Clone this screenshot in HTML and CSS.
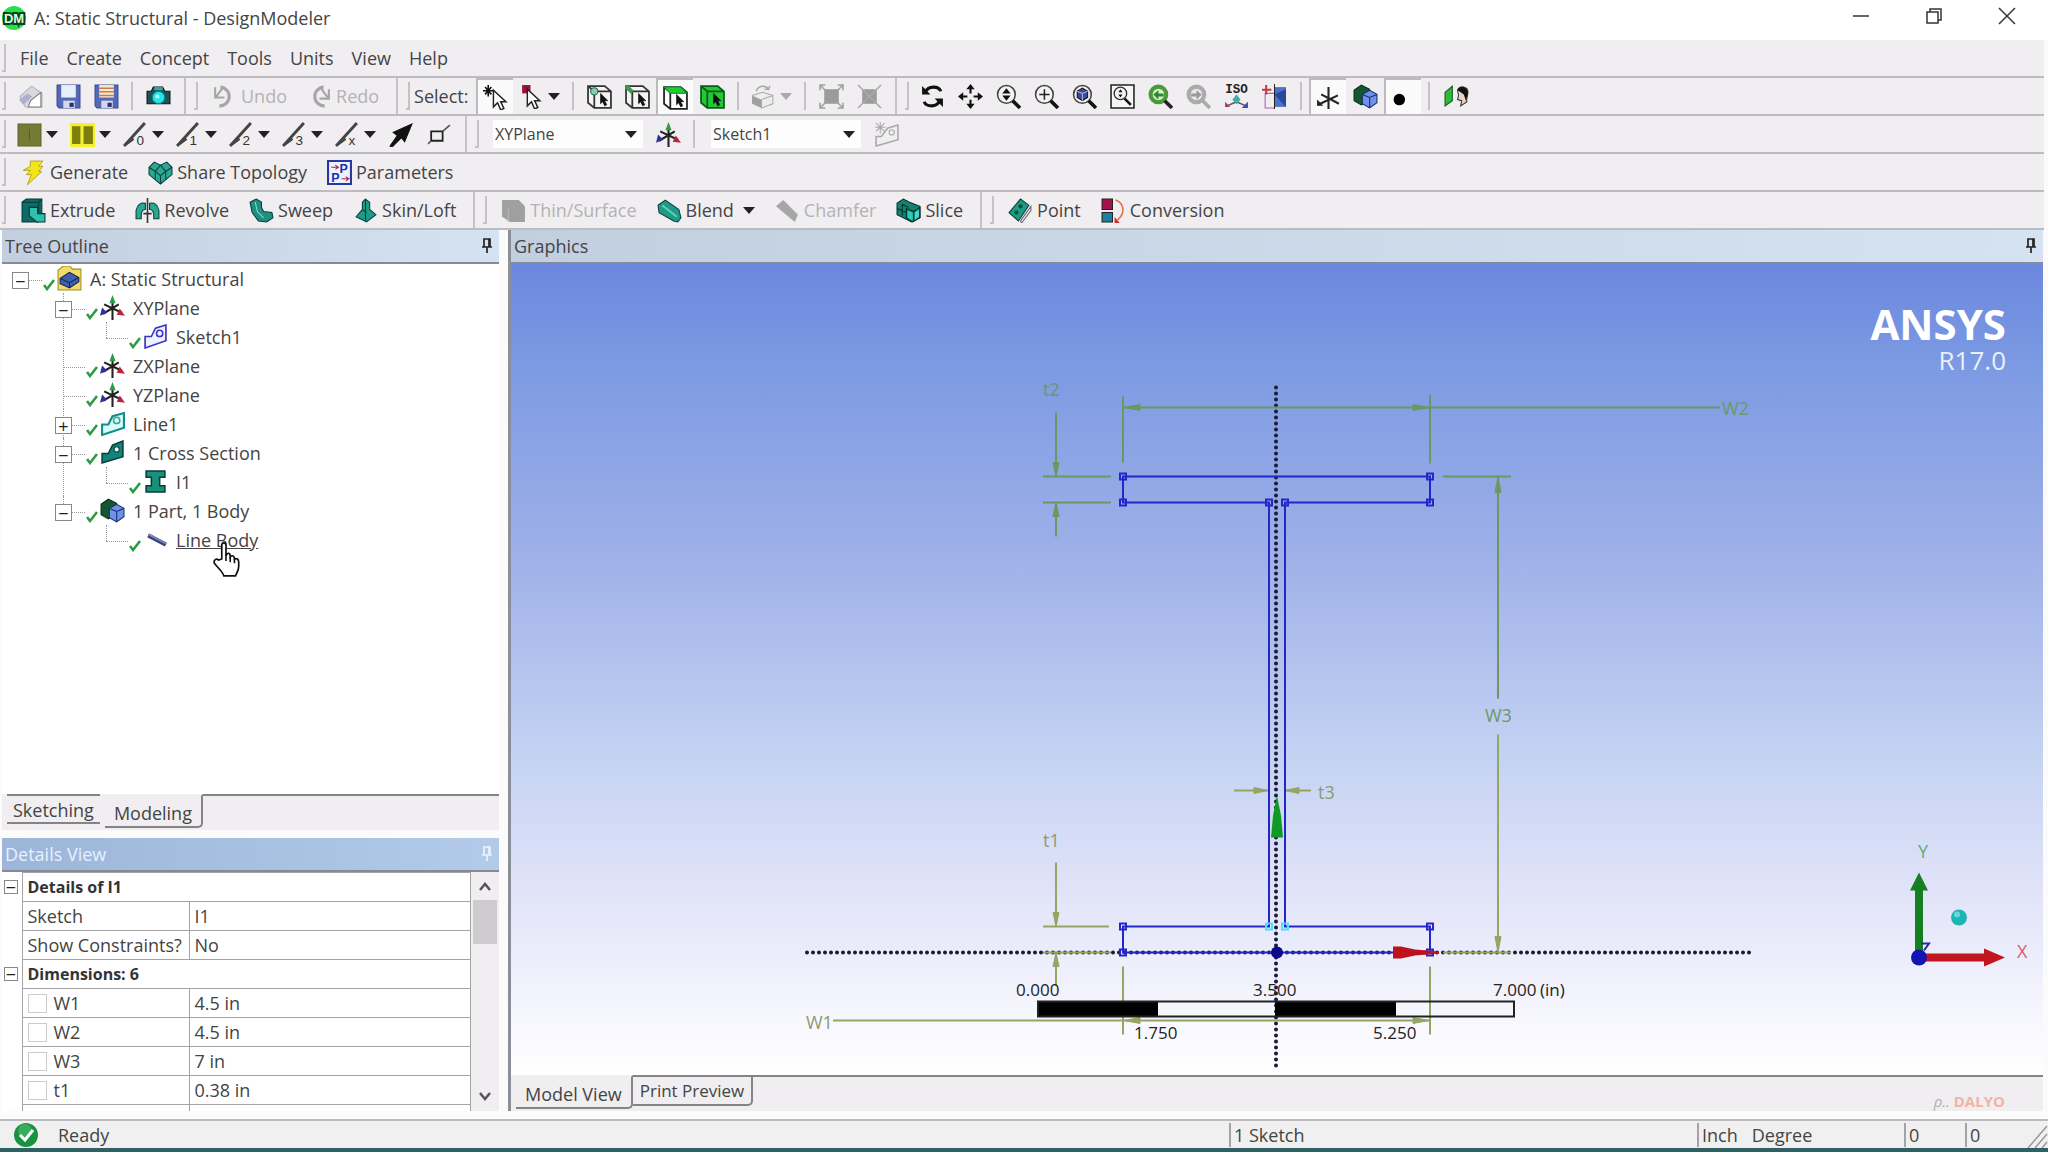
FILE: index.html
```html
<!DOCTYPE html>
<html lang="en">

<head>
  <meta charset="utf-8">
  <title>A: Static Structural - DesignModeler</title>
  <link rel="stylesheet" href="styles.css">
</head>

<body>
  <!-- icon set -->
  <svg class="sprite" aria-hidden="true">
    <symbol id="i-open" viewBox="0 0 24 24"><path d="M2 12L13 2l10 7v13H7z" fill="#d9d9e0" stroke="#b5b5bd"/><path d="M12 16l10-8v14H10z" fill="#fff" stroke="#777"/><path d="M1 15l8-6 5 3-9 8z" fill="#aeb0cc"/></symbol>
    <symbol id="i-save" viewBox="0 0 24 24"><path d="M1 1h22v22H3l-2-2z" fill="#5468b8" stroke="#3c4a90"/><path d="M5 1h14v12H5z" fill="#e6eef8"/><path d="M7 16h11v7H7z" fill="#d5d8ea"/><path d="M13 18h4v4h-4z" fill="#26306e"/></symbol>
    <symbol id="i-saveas" viewBox="0 0 24 24"><path d="M1 1h22v22H3l-2-2z" fill="#5468b8" stroke="#3c4a90"/><path d="M5 1h14v12H5z" fill="#f7e9d8"/><path d="M5 4h14M5 7.500h14M5 11h14" stroke="#d07a3c" stroke-width="1.500"/><path d="M7 16h11v7H7z" fill="#d5d8ea"/><path d="M13 18h4v4h-4z" fill="#26306e"/></symbol>
    <symbol id="i-camera" viewBox="0 0 24 24"><path d="M1 7h4l2-4h9l2 4h5v12H1z" fill="#1e4f5a" stroke="#111"/><path d="M8 3h8v3H8z" fill="#3aa"/><circle cx="12" cy="13" r="6" fill="#2be0ea" stroke="#087"/><circle cx="11" cy="12" r="2" fill="#b8ffff"/></symbol>
    <symbol id="i-undo" viewBox="0 0 24 24"><path d="M8 3a9 9 0 1 1-1 18" fill="none" stroke="#a6a6a6" stroke-width="3"/><path d="M3 3v10h9M4 12l6-8" fill="none" stroke="#a6a6a6" stroke-width="2"/></symbol>
    <symbol id="i-redo" viewBox="0 0 24 24"><path d="M16 3a9 9 0 1 0 1 18" fill="none" stroke="#a6a6a6" stroke-width="3"/><path d="M21 5v9h-9M20 13l-6-8" fill="none" stroke="#a6a6a6" stroke-width="2"/></symbol>
    <symbol id="i-pick" viewBox="0 0 24 24"><path d="M5 0v11M0 5.500h10M2 2l6 7M8 2L2 9" stroke="#111" stroke-width="1.500"/><path d="M10 5v16l4-4 3 7 3-1.500-3-6.500h5z" fill="#fff" stroke="#222" stroke-width="1.400"/></symbol>
    <symbol id="i-mode" viewBox="0 0 24 24"><path d="M3 1h8v8H3z" fill="#9c1230"/><path d="M8 5v16l4-4 3 7 3-1.500-3-6.500h5z" fill="#fff" stroke="#222" stroke-width="1.400"/></symbol>
    <symbol id="i-cursor" viewBox="0 0 24 24"><path d="M13 9v10l2-2 2 4 2-1-2-4h3z" fill="#111" stroke="#111" stroke-width=".6"/></symbol>
    <symbol id="i-selv" viewBox="0 0 24 24"><path d="M1 2h16l6 5v16H7l-6-5zM7 7h16M7 7v16M7 7L1 2" fill="#f4f4f2" stroke="#333" stroke-width="1.700"/><circle cx="7" cy="7" r="3.500" fill="#8fc9ae" stroke="#176b48"/><use href="#i-cursor" width="24" height="24"/></symbol>
    <symbol id="i-sele" viewBox="0 0 24 24"><path d="M1 2h16l6 5v16H7l-6-5zM7 7h16M7 7v16M7 7L1 2" fill="#f4f4f2" stroke="#333" stroke-width="1.700"/><path d="M1 2l6 6" stroke="#3c9b50" stroke-width="4"/><use href="#i-cursor" width="24" height="24"/></symbol>
    <symbol id="i-self" viewBox="0 0 24 24"><path d="M1 2h16l6 5v16H7l-6-5zM7 7h16M7 7v16M7 7L1 2" fill="#fff" stroke="#222" stroke-width="1.700"/><path d="M1 2h16l6 6H7z" fill="#1fd02c" stroke="#184"/><use href="#i-cursor" width="24" height="24"/></symbol>
    <symbol id="i-selb" viewBox="0 0 24 24"><path d="M1 2h16l6 5v16H7l-6-5zM7 7h16M7 7v16M7 7L1 2" fill="#22c932" stroke="#0a5a18" stroke-width="1.700"/><use href="#i-cursor" width="24" height="24"/></symbol>
    <symbol id="i-extend" viewBox="0 0 24 24"><path d="M1 11l9 4v8l-9-4z" fill="#a0a0a0"/><path d="M10 15l11-4v8l-11 4zM1 11l10-3 10 3" fill="#ededed" stroke="#aaa"/><path d="M5 7c2-6 9-6 12-2l1-3M17 5h-4" fill="none" stroke="#a8a8a8" stroke-width="1.500"/></symbol>
    <symbol id="i-expand" viewBox="0 0 24 24"><path d="M5 5h14v14H5z" fill="#9b9b9b"/><path d="M1 6V1h5M18 1h5v5M23 18v5h-5M6 23H1v-5M1 1l5 5M23 1l-5 5M23 23l-5-5M1 23l5-5" fill="none" stroke="#a0a0a0" stroke-width="1.500"/></symbol>
    <symbol id="i-shrink" viewBox="0 0 24 24"><path d="M5 5h14v14H5z" fill="#9b9b9b"/><path d="M1 1l22 22M23 1L1 23" stroke="#aaa" stroke-width="1.500"/></symbol>
    <symbol id="i-rotate" viewBox="0 0 24 24"><path d="M5 8c3-7 13-6 15-1M19 16c-3 7-13 6-15 1" fill="none" stroke="#111" stroke-width="3"/><path d="M2 2v8h8zM22 22v-8h-8z" fill="#111"/></symbol>
    <symbol id="i-pan" viewBox="0 0 24 24"><path d="M12 0l4 5H8zM12 24l4-5H8zM0 12l5-4v8zM24 12l-5-4v8z" fill="#111"/><path d="M12 4v5M12 15v5M4 12h5M15 12h5" stroke="#111" stroke-width="2"/></symbol>
    <symbol id="i-lens" viewBox="0 0 24 24"><circle cx="10" cy="10" r="8.500" fill="#f2f2f2" stroke="#444" stroke-width="1.500"/><path d="M16 16l7 7" stroke="#111" stroke-width="3.500"/></symbol>
    <symbol id="i-zoom" viewBox="0 0 24 24"><use href="#i-lens" width="24" height="24"/><path d="M10 4l4 5H6zM10 16l4-5H6z" fill="#111"/></symbol>
    <symbol id="i-zoomin" viewBox="0 0 24 24"><use href="#i-lens" width="24" height="24"/><path d="M10 5v10M5 10h10" stroke="#222" stroke-width="1.500"/></symbol>
    <symbol id="i-zoomfit" viewBox="0 0 24 24"><use href="#i-lens" width="24" height="24"/><path d="M5 7l5-3 5 3v6l-5 3-5-3z" fill="#3c4c90" stroke="#112"/><path d="M5 7l5 2 5-2M10 9v7" fill="none" stroke="#aab6ea"/></symbol>
    <symbol id="i-zoomwin" viewBox="0 0 24 24"><path d="M1 1h22v22H1z" fill="#f6f6f6" stroke="#222" stroke-width="1.500"/><circle cx="10" cy="9" r="6" fill="none" stroke="#333" stroke-width="1.300"/><path d="M14 14l6 6" stroke="#111" stroke-width="2.500"/><path d="M10 5l2 3H8zM10 13l2-3H8z" fill="#111"/></symbol>
    <symbol id="i-prev" viewBox="0 0 24 24"><circle cx="10" cy="10" r="7.500" fill="#d8f0cc" stroke="#4a9a3a" stroke-width="4"/><path d="M16 16l7 7" stroke="#222" stroke-width="3.500"/><path d="M5 10l5-4v3h5v3h-5v3z" fill="#2c8a2c"/></symbol>
    <symbol id="i-next" viewBox="0 0 24 24"><circle cx="10" cy="10" r="7.500" fill="#e8e8e8" stroke="#ababab" stroke-width="4"/><path d="M16 16l7 7" stroke="#ababab" stroke-width="3.500"/><path d="M15 10l-5-4v3H5v3h5v3z" fill="#999"/></symbol>
    <symbol id="i-iso" viewBox="0 0 24 24"><text x="12" y="9" text-anchor="middle" font-size="12" font-weight="bold" font-family="Liberation Mono" fill="#222">ISO</text><path d="M12 11v8M12 17l-9 4M12 17l9 4" stroke="#556" stroke-width="1.500"/><path d="M12 10l4 5-4 4-4-4z" fill="#35b3a8"/><path d="M1 17l5 5H1z" fill="#b0307a"/><path d="M23 17v6h-6z" fill="#3a4ac0"/></symbol>
    <symbol id="i-plane" viewBox="0 0 24 24"><path d="M3 9h9v14H3z" fill="none" stroke="#a066b0"/><path d="M12 3h11v19H12z" fill="#4b72c8"/><path d="M12 10l11-5v17z" fill="#27489c"/><path d="M12 0v24" stroke="#222"/><path d="M4 1v9M0 5.500h9" stroke="#c23a48" stroke-width="2"/></symbol>
    <symbol id="i-axisbw" viewBox="0 0 24 24"><path d="M12 2v21M2 19l19-9M5 9l17 9" fill="none" stroke="#222" stroke-width="2"/><path d="M1 14l6 6H1z" fill="#222"/></symbol>
    <symbol id="i-body" viewBox="0 0 24 24"><path d="M1 6l7-5 8 4v11l-8 4-7-4z" fill="#14562f" stroke="#0b301b"/><path d="M9 10l7-4 7 4v8l-7 5-7-4z" fill="#6c92ea" stroke="#1a2c70"/><path d="M9 10l7 3 7-3M16 13v10" fill="none" stroke="#1a2c70"/></symbol>
    <symbol id="i-dot" viewBox="0 0 24 24"><circle cx="8" cy="14" r="5.500" fill="#000"/></symbol>
    <symbol id="i-look" viewBox="0 0 24 24"><path d="M1 8l7-6v14l-7 5z" fill="#2fb83a" stroke="#175c1e"/><path d="M13 6c2-5 10-4 10 2 0 4-2 6-1 9l-6 4 1-5-4-1 1-4z" fill="#e9d4c6" stroke="#333"/><path d="M13 6c2-5 10-4 10 3l-2 7-2-6-3-2z" fill="#111"/></symbol>
    <symbol id="i-sq1" viewBox="0 0 24 24"><path d="M1 2h22v21H1z" fill="#757a35"/><path d="M1 2h22v21H1zM12 7v11" fill="none" stroke="#5c6025"/></symbol>
    <symbol id="i-sq2" viewBox="0 0 24 24"><path d="M0 1h24v23H0z" fill="#f2f030"/><path d="M2 4h8v17H2zM13 4h9v17h-9z" fill="#7e7e0c"/></symbol>
    <symbol id="i-edge" viewBox="0 0 24 24"><path d="M1 23L21 1M2 22l8-6" stroke="#444" stroke-width="2.800"/></symbol>
    <symbol id="i-dir" viewBox="0 0 24 24"><path d="M1 23l7-10-4-3 18-8-7 17-3-4L3 24z" fill="#111" stroke="#111"/></symbol>
    <symbol id="i-vert" viewBox="0 0 24 24"><path d="M4 9h11v9H4z" fill="none" stroke="#222" stroke-width="1.700"/><path d="M15 9l7-6M4 18l-3 3" stroke="#555" stroke-width="1.500"/></symbol>
    <symbol id="i-axis" viewBox="0 0 24 24"><path d="M12 4v20M3 18l15-9M4 9l17 8" fill="none" stroke="#222" stroke-width="2"/><path d="M12 0l3 8H9z" fill="#2f9b45"/><path d="M24 20l-8-1 3-6z" fill="#b8263e"/><path d="M0 20l2-8 5 5z" fill="#30309c"/></symbol>
    <symbol id="i-sketch" viewBox="0 0 24 24"><path d="M2 12h6l4-8 10-3v15L2 23z" fill="#f2f2ff" stroke="#3b35c4" stroke-width="1.600"/><circle cx="16" cy="9" r="3" fill="none" stroke="#3b35c4" stroke-width="1.500"/></symbol>
    <symbol id="i-newsk" viewBox="0 0 24 24"><path d="M2 14h5l6-8 10-3v14L2 23z" fill="none" stroke="#a8a8a8" stroke-width="1.500"/><circle cx="17" cy="10" r="2.500" fill="none" stroke="#a8a8a8"/><path d="M6 0v11M1 5h10M2 1l8 8M10 1L2 9" stroke="#a8a8a8"/></symbol>
    <symbol id="i-bolt" viewBox="0 0 24 24"><path d="M9 1l12 0-4 5h4l-4 5h3L6 24l4-10H5l4-4H2l7-4z" fill="#f5e31c" stroke="#a99b10" stroke-width=".8"/></symbol>
    <symbol id="i-share" viewBox="0 0 24 24"><path d="M1 7l5-5 6 3 6-3 5 5v7l-11 9L1 14z" fill="#2aa893" stroke="#08403a"/><path d="M1 7l6 4 5-6 5 6 6-4M7 11v7M17 11v7M7 11l5 4 5-4M12 15v8" fill="none" stroke="#08403a"/></symbol>
    <symbol id="i-param" viewBox="0 0 24 24"><path d="M1 1h22v22H1z" fill="#eef2ff" stroke="#2738a0" stroke-width="2"/><text x="12" y="12" font-size="12" font-weight="bold" font-family="Liberation Sans" fill="#1b2fa8">P</text><text x="4" y="21" font-size="12" font-weight="bold" font-family="Liberation Sans" fill="#1b2fa8">P</text><path d="M4 7h6M8 5l3 2-3 2M14 18h6M18 16l3 2-3 2" fill="none" stroke="#a02a50"/></symbol>
    <symbol id="i-extrude" viewBox="0 0 24 24"><path d="M1 4l4-3h15v18l-3 4H1z" fill="#0d6b66" stroke="#053a38"/><path d="M1 4h16v19M17 4l3-3" fill="none" stroke="#053a38"/><path d="M8 9h8v6h7v8h-8l-7-6z" fill="#2fc0ab" stroke="#053a38"/></symbol>
    <symbol id="i-revolve" viewBox="0 0 24 24"><path d="M1 12c1-6 5-8 9-7v6c-3 0-4 2-4 6v3H1zM23 12c-1-6-5-8-9-7v6c3 0 4 2 4 6v3h5z" fill="#2aa893" stroke="#08403a"/><path d="M12 0v24M8 15h8" stroke="#333" stroke-width="1.500"/></symbol>
    <symbol id="i-sweep" viewBox="0 0 24 24"><path d="M1 4l6-3 5 3v5l2 4 8 1 1 5-6 4-8-1-6-8z" fill="#1f8f80" stroke="#08403a"/><path d="M6 4l2 9 6 6" fill="none" stroke="#7fe0d0"/></symbol>
    <symbol id="i-skin" viewBox="0 0 24 24"><path d="M12 1l4 3v7l6 5-9 7-10-5 6-7V4z" fill="#1f9a86" stroke="#08403a"/><path d="M12 2v20M9 11l4 3" stroke="#08403a"/></symbol>
    <symbol id="i-thin" viewBox="0 0 24 24"><path d="M1 2h16l6 6v15H9L1 18z" fill="#a0a0a0"/><path d="M7 23V9" stroke="#b8b8b8"/></symbol>
    <symbol id="i-blend" viewBox="0 0 24 24"><path d="M1 7l7-5 13 9 2 8-3 4-4-1L2 14z" fill="#1f9a86" stroke="#08403a"/><path d="M5 7l14 11" stroke="#62cdbb" stroke-width="2"/></symbol>
    <symbol id="i-chamfer" viewBox="0 0 24 24"><path d="M1 8l7-6 14 14-3 7z" fill="#a6a6a6"/></symbol>
    <symbol id="i-slice" viewBox="0 0 24 24"><path d="M1 5l6-4 6 3 10 4v11l-8 4-8-4-6-3z" fill="#148070" stroke="#05322d"/><path d="M10 10l7 3 6-4v10l-7 4-6-4zM6 6l6 3M6 6v11M1 10l9 4M17 13v10" fill="none" stroke="#05322d"/><path d="M11 12l5 2v8l-5-3z" fill="#27d0b6"/><path d="M18 14l4-3v7l-4 3z" fill="#43dcc6"/></symbol>
    <symbol id="i-point" viewBox="0 0 24 24"><path d="M1 14L12 1l8 6-10 15z" fill="#1f9a86" stroke="#08403a"/><path d="M12 22l10-14v4L13 24z" fill="#eee" stroke="#666"/><circle cx="12" cy="8" r="2" fill="#053"/><circle cx="8" cy="14" r="2" fill="#053"/></symbol>
    <symbol id="i-conv" viewBox="0 0 24 24"><path d="M1 1h10v10H1z" fill="#a8104a" stroke="#222"/><path d="M1 14h10v9H1z" fill="#1f7fa0" stroke="#222"/><path d="M14 2c8 3 10 12 2 19" fill="none" stroke="#e0704a" stroke-width="1.500"/><path d="M13 18v6h5z" fill="#c33"/></symbol>
    <symbol id="i-folder" viewBox="0 0 24 24"><path d="M1 4l5-4h6l3 3h8v20H1z" fill="#f0dc6a" stroke="#a08c20"/><path d="M3 12l9-6 9 5v4l-9 6-9-4z" fill="#3d5fae" stroke="#1a2450"/><path d="M3 12l9 4 9-5M12 16v5" fill="none" stroke="#1a2450"/></symbol>
    <symbol id="i-line" viewBox="0 0 24 24"><path d="M2 13h6l4-8 11-3v14L2 23z" fill="#d8fbf6" stroke="#138d88" stroke-width="2"/><circle cx="16" cy="9" r="3" fill="none" stroke="#35a7a0" stroke-width="1.500"/></symbol>
    <symbol id="i-cross" viewBox="0 0 24 24"><path d="M2 13h6l4-8 10-4v15L2 22z" fill="#12857a" stroke="#083f3a" stroke-width="1.500"/><circle cx="16" cy="9" r="2.500" fill="#e8fffb" stroke="#083f3a"/></symbol>
    <symbol id="i-ibeam" viewBox="0 0 24 24"><path d="M3 2h18v6h-5v8h5v6H3v-6h5V8H3z" fill="#17917c" stroke="#093f37" stroke-width="1.500"/></symbol>
    <symbol id="i-linebody" viewBox="0 0 24 24"><path d="M5 8l17 9" stroke="#3c4470" stroke-width="4"/><path d="M5 7l17 9" stroke="#7f8cc4" stroke-width="1.500"/></symbol>
    <symbol id="i-check" viewBox="0 0 12 12"><path d="M1 6l3 4 7-9" fill="none" stroke="#2f9b40" stroke-width="2.600"/></symbol>
    <symbol id="i-pin" viewBox="0 0 12 16"><path d="M3 1h6v8H3zM1 9h10M6 9v6M8 1v8" fill="none" stroke="currentColor" stroke-width="1.700"/></symbol>
  </svg>

  <header class="titlebar">
    <svg class="app-logo" viewBox="0 0 24 24"><circle cx="12" cy="12" r="12" fill="#28e04c"/><text x="12" y="17" text-anchor="middle" font-size="13" font-weight="bold" font-family="Liberation Sans" fill="#d8ffd8" stroke="#042" stroke-width="4" paint-order="stroke">DM</text></svg>
    <span class="title">A: Static Structural - DesignModeler</span>
    <button class="win-btn" aria-label="Minimize"><svg viewBox="0 0 18 18"><path d="M1 9h16"/></svg></button>
    <button class="win-btn" aria-label="Restore"><svg viewBox="0 0 18 18"><path d="M2 5h11v11H2zM5 5V2h11v11h-3"/></svg></button>
    <button class="win-btn" aria-label="Close"><svg viewBox="0 0 18 18"><path d="M1 1l16 16M17 1L1 17"/></svg></button>
  </header>

  <nav class="row menu">
    <span class="grip"></span>
    <button>File</button>
    <button>Create</button>
    <button>Concept</button>
    <button>Tools</button>
    <button>Units</button>
    <button>View</button>
    <button>Help</button>
  </nav>

  <div class="row">
    <div class="bar">
      <span class="grip"></span>
      <button class="tool" aria-label="Open"><svg><use href="#i-open"/></svg></button>
      <button class="tool" aria-label="Save"><svg><use href="#i-save"/></svg></button>
      <button class="tool" aria-label="Save as"><svg><use href="#i-saveas"/></svg></button>
      <span class="sep"></span>
      <button class="tool" aria-label="Image capture"><svg><use href="#i-camera"/></svg></button>
    </div>
    <div class="bar">
      <span class="grip"></span>
      <button class="cmd" disabled><svg><use href="#i-undo"/></svg>Undo</button>
      <button class="cmd" disabled><svg><use href="#i-redo"/></svg>Redo</button>
    </div>
    <div class="bar">
      <span class="grip"></span>
      <span class="bar-label">Select:</span>
      <button class="tool pressed" aria-label="New selection"><svg><use href="#i-pick"/></svg></button>
      <button class="tool drop" aria-label="Select mode"><svg><use href="#i-mode"/></svg><i class="caret"></i></button>
      <span class="sep"></span>
      <button class="tool" aria-label="Points"><svg><use href="#i-selv"/></svg></button>
      <button class="tool" aria-label="Edges"><svg><use href="#i-sele"/></svg></button>
      <button class="tool pressed" aria-label="Faces"><svg><use href="#i-self"/></svg></button>
      <button class="tool" aria-label="Bodies"><svg><use href="#i-selb"/></svg></button>
      <span class="sep"></span>
      <button class="tool drop" aria-label="Extend selection" disabled><svg><use href="#i-extend"/></svg><i class="caret"></i></button>
      <span class="sep"></span>
      <button class="tool" aria-label="Expand" disabled><svg><use href="#i-expand"/></svg></button>
      <button class="tool" aria-label="Shrink" disabled><svg><use href="#i-shrink"/></svg></button>
    </div>
    <div class="bar open view">
      <span class="grip"></span>
      <button class="tool" aria-label="Rotate"><svg><use href="#i-rotate"/></svg></button>
      <button class="tool" aria-label="Pan"><svg><use href="#i-pan"/></svg></button>
      <button class="tool" aria-label="Zoom"><svg><use href="#i-zoom"/></svg></button>
      <button class="tool" aria-label="Zoom in"><svg><use href="#i-zoomin"/></svg></button>
      <button class="tool" aria-label="Zoom to fit"><svg><use href="#i-zoomfit"/></svg></button>
      <button class="tool" aria-label="Box zoom"><svg><use href="#i-zoomwin"/></svg></button>
      <button class="tool" aria-label="Previous view"><svg><use href="#i-prev"/></svg></button>
      <button class="tool" aria-label="Next view" disabled><svg><use href="#i-next"/></svg></button>
      <button class="tool" aria-label="ISO view"><svg><use href="#i-iso"/></svg></button>
      <button class="tool" aria-label="Look at plane"><svg><use href="#i-plane"/></svg></button>
      <span class="sep"></span>
      <button class="tool pressed" aria-label="Display plane"><svg><use href="#i-axisbw"/></svg></button>
      <button class="tool" aria-label="Display model"><svg><use href="#i-body"/></svg></button>
      <button class="tool pressed" aria-label="Display points"><svg><use href="#i-dot"/></svg></button>
      <span class="sep"></span>
      <button class="tool" aria-label="Look at face"><svg><use href="#i-look"/></svg></button>
    </div>
  </div>

  <div class="row">
    <div class="bar">
      <span class="grip"></span>
      <button class="tool drop" aria-label="Face colour"><svg><use href="#i-sq1"/></svg><i class="caret"></i></button>
      <button class="tool drop" aria-label="Edge colour"><svg><use href="#i-sq2"/></svg><i class="caret"></i></button>
      <button class="tool drop" aria-label="Edges 0"><svg viewBox="0 0 24 24"><use href="#i-edge"/><text class="edge-num" x="13" y="22">0</text></svg><i class="caret"></i></button>
      <button class="tool drop" aria-label="Edges 1"><svg viewBox="0 0 24 24"><use href="#i-edge"/><text class="edge-num" x="13" y="22">1</text></svg><i class="caret"></i></button>
      <button class="tool drop" aria-label="Edges 2"><svg viewBox="0 0 24 24"><use href="#i-edge"/><text class="edge-num" x="13" y="22">2</text></svg><i class="caret"></i></button>
      <button class="tool drop" aria-label="Edges 3"><svg viewBox="0 0 24 24"><use href="#i-edge"/><text class="edge-num" x="13" y="22">3</text></svg><i class="caret"></i></button>
      <button class="tool drop" aria-label="Edges X"><svg viewBox="0 0 24 24"><use href="#i-edge"/><text class="edge-num" x="13" y="22">x</text></svg><i class="caret"></i></button>
      <button class="tool" aria-label="Edge direction"><svg><use href="#i-dir"/></svg></button>
      <button class="tool" aria-label="Vertices"><svg><use href="#i-vert"/></svg></button>
    </div>
    <div class="bar open">
      <span class="grip"></span>
      <label class="combo"><select aria-label="Active plane"><option>XYPlane</option></select><i class="caret"></i></label>
      <button class="tool" aria-label="New plane"><svg><use href="#i-axis"/></svg></button>
      <span class="sep"></span>
      <label class="combo"><select aria-label="Active sketch"><option>Sketch1</option></select><i class="caret"></i></label>
      <button class="tool" aria-label="New sketch" disabled><svg><use href="#i-newsk"/></svg></button>
    </div>
  </div>

  <div class="row">
    <div class="bar open">
      <span class="grip"></span>
      <button class="cmd"><svg><use href="#i-bolt"/></svg>Generate</button>
      <button class="cmd"><svg><use href="#i-share"/></svg>Share Topology</button>
      <button class="cmd"><svg><use href="#i-param"/></svg>Parameters</button>
    </div>
  </div>

  <div class="row">
    <div class="bar">
      <span class="grip"></span>
      <button class="cmd"><svg><use href="#i-extrude"/></svg>Extrude</button>
      <button class="cmd"><svg><use href="#i-revolve"/></svg>Revolve</button>
      <button class="cmd"><svg><use href="#i-sweep"/></svg>Sweep</button>
      <button class="cmd"><svg><use href="#i-skin"/></svg>Skin/Loft</button>
    </div>
    <div class="bar">
      <span class="grip"></span>
      <button class="cmd" disabled><svg><use href="#i-thin"/></svg>Thin/Surface</button>
      <button class="cmd"><svg><use href="#i-blend"/></svg>Blend<i class="caret"></i></button>
      <button class="cmd" disabled><svg><use href="#i-chamfer"/></svg>Chamfer</button>
      <button class="cmd"><svg><use href="#i-slice"/></svg>Slice</button>
    </div>
    <div class="bar open">
      <span class="grip"></span>
      <button class="cmd"><svg><use href="#i-point"/></svg>Point</button>
      <button class="cmd"><svg><use href="#i-conv"/></svg>Conversion</button>
    </div>
  </div>

  <main>
    <aside>
      <section class="outline">
        <h2 class="pane-title">Tree Outline<svg class="pin"><use href="#i-pin"/></svg></h2>
        <ul class="tree">
          <li>
            <div class="node"><button class="toggle">−</button><svg class="check"><use href="#i-check"/></svg><svg class="icon"><use href="#i-folder"/></svg>A: Static Structural</div>
            <ul>
              <li>
                <div class="node"><button class="toggle">−</button><svg class="check"><use href="#i-check"/></svg><svg class="icon"><use href="#i-axis"/></svg>XYPlane</div>
                <ul>
                  <li><div class="node leaf"><svg class="check"><use href="#i-check"/></svg><svg class="icon"><use href="#i-sketch"/></svg>Sketch1</div></li>
                </ul>
              </li>
              <li><div class="node leaf"><svg class="check"><use href="#i-check"/></svg><svg class="icon"><use href="#i-axis"/></svg>ZXPlane</div></li>
              <li><div class="node leaf"><svg class="check"><use href="#i-check"/></svg><svg class="icon"><use href="#i-axis"/></svg>YZPlane</div></li>
              <li><div class="node"><button class="toggle">+</button><svg class="check"><use href="#i-check"/></svg><svg class="icon"><use href="#i-line"/></svg>Line1</div></li>
              <li>
                <div class="node"><button class="toggle">−</button><svg class="check"><use href="#i-check"/></svg><svg class="icon"><use href="#i-cross"/></svg>1 Cross Section</div>
                <ul>
                  <li><div class="node leaf"><svg class="check"><use href="#i-check"/></svg><svg class="icon"><use href="#i-ibeam"/></svg>I1</div></li>
                </ul>
              </li>
              <li>
                <div class="node"><button class="toggle">−</button><svg class="check"><use href="#i-check"/></svg><svg class="icon"><use href="#i-body"/></svg>1 Part, 1 Body</div>
                <ul>
                  <li><div class="node leaf"><svg class="check"><use href="#i-check"/></svg><svg class="icon"><use href="#i-linebody"/></svg><span class="hovered">Line Body<svg class="hand" viewBox="0 0 26 34"><path d="M9 17V4c0-3 4-3 4 0v10l1-2c2-1 3 0 3 3 2-2 4-1 4 2 2-1 4 0 4 3v4c0 4-2 6-3 9H11c-1-4-6-8-9-12-1-3 2-5 4-3z" fill="#fff" stroke="#111" stroke-width="1.600"/><path d="M13 13v6M17 15v5M21 17v4" stroke="#111" stroke-width="1.500"/></svg></span></div></li>
                </ul>
              </li>
            </ul>
          </li>
        </ul>
        <div class="tabs">
          <button class="tab">Sketching</button>
          <button class="tab active">Modeling</button>
          <span class="tab-rest"></span>
        </div>
      </section>

      <section class="details">
        <h2 class="pane-title focused">Details View<svg class="pin"><use href="#i-pin"/></svg></h2>
        <div class="details-body">
          <table>
            <tr><td class="fold"><button class="toggle">−</button></td><th colspan="2">Details of I1</th></tr>
            <tr><td class="fold"></td><td class="key">Sketch</td><td>I1</td></tr>
            <tr><td class="fold"></td><td class="key">Show Constraints?</td><td>No</td></tr>
            <tr><td class="fold"><button class="toggle">−</button></td><th colspan="2">Dimensions: 6</th></tr>
            <tr><td class="fold"></td><td class="key"><label><input type="checkbox">W1</label></td><td>4.5 in</td></tr>
            <tr><td class="fold"></td><td class="key"><label><input type="checkbox">W2</label></td><td>4.5 in</td></tr>
            <tr><td class="fold"></td><td class="key"><label><input type="checkbox">W3</label></td><td>7 in</td></tr>
            <tr><td class="fold"></td><td class="key"><label><input type="checkbox">t1</label></td><td>0.38 in</td></tr>
            <tr><td class="fold"></td><td class="key"></td><td></td></tr>
          </table>
          <div class="scroll">
            <svg viewBox="0 0 14 14"><path d="M2 10l5-6 5 6"/></svg>
            <div class="thumb"></div>
            <svg viewBox="0 0 14 14"><path d="M2 4l5 6 5-6"/></svg>
          </div>
        </div>
      </section>
    </aside>

    <section class="graphics">
      <h2 class="pane-title">Graphics<svg class="pin"><use href="#i-pin"/></svg></h2>
      <svg class="canvas" viewBox="511 265 1532 810">
        <!-- plane axes -->
        <path class="axis-line" d="M807 953H1750M1276 388V1068"/>

        <!-- dimensions -->
        <g class="dim">
          <path d="M1123 397V463M1430 395V464M1123 408H1720"/>
          <path d="M1043 477H1111M1043 503H1111M1056 413V477M1056 503V537"/>
          <path d="M1443 477H1511M1498 477V699"/>
          <path class="head" d="M1124 408l16-3v6zM1429 408l-16-3v6zM1056 477l-3-14h6zM1056 503l-3 14h6zM1498 477l-3 16h6z"/>
          <text x="1043" y="396">t2</text>
          <text x="1722" y="415">W2</text>
          <text x="1485" y="722">W3</text>
        </g>
        <g class="dim low">
          <path d="M1498 735V953M1443 953H1511"/>
          <path d="M1234 791H1268M1285 791H1311"/>
          <path d="M1043 927H1109M1043 953H1111M1056 863V927M1056 953V986"/>
          <path d="M1123 967V1035M1430 967V1035M833 1021H1430"/>
          <path class="head" d="M1498 953l-3-16h6zM1268 791l-14-3v6zM1285 791l14-3v6zM1056 927l-3-14h6zM1056 953l-3 14h6zM1124 1021l16-3v6zM1429 1021l-16-3v6z"/>
          <text x="1318" y="799">t3</text>
          <text x="1043" y="847">t1</text>
          <text x="806" y="1029">W1</text>
        </g>

        <!-- I section -->
        <g class="section">
          <path d="M1269 503H1123V477H1430V503H1285V927H1430V953H1123V927H1269z"/>
          <path d="M1120 474h6v6h-6zM1427 474h6v6h-6zM1120 500h6v6h-6zM1266 500h6v6h-6zM1282 500h6v6h-6zM1427 500h6v6h-6zM1120 924h6v6h-6zM1427 924h6v6h-6zM1120 950h6v6h-6zM1427 950h6v6h-6z"/>
          <path class="free" d="M1266 924h6v6h-6zM1282 924h6v6h-6z"/>
        </g>
        <path d="M1277 796l4 20 2 22h-12l2-22z" fill="#0f9a28"/>
        <path d="M1393 947h8l14 3 24 2v2l-24 2-14 3h-8z" fill="#c0101c"/>
        <circle cx="1277" cy="953" r="6" fill="#0a0a8c"/>

        <!-- scale -->
        <g class="scale">
          <path d="M1038 1002h120v15h-120zM1275 1002h121v15h-121z" fill="#000"/>
          <path d="M1038 1002h476v15h-476z" fill="none" stroke="#222" stroke-width="2"/>
          <text x="1016" y="996">0.000</text>
          <text x="1253" y="996">3.500</text>
          <text x="1493" y="996">7.000</text>
          <text x="1540" y="996">(in)</text>
          <text x="1134" y="1039">1.750</text>
          <text x="1373" y="1039">5.250</text>
        </g>

        <!-- triad -->
        <path d="M1915 955V891h-5l9-18 9 18h-5v64z" fill="#15801f"/>
        <path d="M1925 954h59v-5l21 9-21 9v-5h-59z" fill="#c4141e"/>
        <circle cx="1919" cy="958" r="8" fill="#1414b4"/>
        <circle cx="1959" cy="918" r="8" fill="#1fb5b5"/>
        <circle cx="1957" cy="915" r="3" fill="#63dcd8"/>
        <text x="1918" y="858" class="letter" fill="#5cae78">Y</text>
        <text x="2017" y="958" class="letter" fill="#dc5c64">X</text>
        <path d="M1921 944h8l-5 7" fill="none" stroke="#2a2aa0" stroke-width="2"/>

        <text x="2006" y="340" class="brand">ANSYS</text>
        <text x="2006" y="370" class="release">R17.0</text>
      </svg>
      <div class="tabs">
        <button class="tab active">Model View</button>
        <button class="tab boxed">Print Preview</button>
        <span class="tab-rest"></span>
        <span class="mark"><i>ρ..</i> <b>DALYO</b></span>
      </div>
    </section>
  </main>

  <footer>
    <svg class="ok" viewBox="0 0 24 24"><circle cx="12" cy="12" r="12" fill="#17943f"/><circle cx="11" cy="8" r="7" fill="#5cc47c" opacity=".5"/><path d="M6 12l5 5 8-10" fill="none" stroke="#fff" stroke-width="3"/></svg>
    <span class="status">Ready</span>
    <span class="cell selection">1 Sketch</span>
    <span class="cell units">Inch&nbsp; &nbsp;Degree</span>
    <span class="cell num">0</span>
    <span class="cell num">0</span>
    <svg class="resize" viewBox="0 0 20 26"><path d="M1 26L20 4M8 26l12-14M15 26l5-6" stroke="#999" stroke-width="1.500"/></svg>
  </footer>
</body>

</html>
```

FILE: styles.css
```css
* {
  box-sizing: border-box;
}

body {
  margin: 0;
  height: 100vh;
  display: flex;
  flex-direction: column;
  overflow: hidden;
  background: #fcfbfc;
  color: #444;
  font-family: "Open Sans", "Noto Sans", sans-serif;
  font-size: 18px;
  line-height: 24px;
}

button,
select {
  font: inherit;
  color: inherit;
  border: 0;
  padding: 0;
  background: none;
}

h2,
ul {
  margin: 0;
  padding: 0;
  list-style: none;
  font-weight: normal;
}

.sprite {
  display: none;
}

/* title bar */
.titlebar {
  flex: none;
  display: flex;
  align-items: center;
  height: 40px;
  padding: 0 5px 4px 2px;
  background: #fff;
}

.app-logo {
  width: 24px;
  height: 24px;
  margin-right: 8px;
}

.title {
  flex: 1;
}

.win-btn {
  width: 73px;
  height: 32px;
}

.win-btn svg {
  width: 18px;
  height: 18px;
  fill: none;
  stroke: #333;
  stroke-width: 1.5;
}

/* menu and toolbars */
.row {
  flex: none;
  display: flex;
  height: 38px;
  margin-right: 4px;
  background: #f0eef0;
  border-bottom: 2px solid #bdbbbd;
}

.grip {
  flex: none;
  width: 4px;
  margin: 4px 4px 4px 8px;
  border-right: 2px solid #c4c2c4;
  border-bottom: 2px solid #c4c2c4;
}

.menu .grip,
.bar:first-child .grip {
  margin-left: 2px;
  margin-right: 5px;
}

.menu button {
  padding: 0 9px;
}

.bar {
  display: flex;
  align-items: stretch;
  padding-right: 7px;
  border-right: 2px solid #c4c2c4;
}

.bar.open {
  border-right: 0;
}

.bar-label {
  align-self: center;
  margin-right: 8px;
}

.tool {
  display: flex;
  align-items: center;
  justify-content: center;
  width: 38px;
}

.tool.drop {
  width: 53px;
  gap: 4px;
}

.tool svg,
.cmd svg {
  flex: none;
  width: 25px;
  height: 25px;
}

.tool.pressed {
  width: 37px;
  background: #fbfafb;
  border-top: 2px solid #bbb;
  border-left: 2px solid #bbb;
}

.sep {
  width: 2px;
  margin: 4px 6px;
  background: #c4c2c4;
}

.view .sep {
  margin: 4px 7px;
}

.caret {
  flex: none;
  border: 6px solid transparent;
  border-top: 7px solid #222;
  border-bottom: 0;
}

.edge-num {
  font: 13px "Liberation Sans", sans-serif;
  fill: #333;
}

.cmd {
  display: flex;
  align-items: center;
  gap: 4px;
  padding: 0 10px;
}

.cmd .caret {
  margin-left: 5px;
}

button:disabled {
  color: #b4b2b4;
}

button:disabled .caret {
  border-top-color: #aaa;
}

.combo {
  display: flex;
  align-items: center;
  width: 150px;
  margin: 4px 6px 4px 10px;
  padding-right: 6px;
  background: #fdfdfd;
}

.combo select {
  flex: 1;
  appearance: none;
  padding-left: 2px;
  font-size: 16px;
}

/* work area */
main {
  flex: 1;
  min-height: 0;
  display: flex;
  padding-bottom: 8px;
}

aside {
  flex: none;
  display: flex;
  flex-direction: column;
  gap: 8px;
  width: 508px;
  padding: 0 9px 0 2px;
}

.outline {
  flex: 1;
  min-height: 0;
  display: flex;
  flex-direction: column;
}

.pane-title {
  flex: none;
  display: flex;
  align-items: center;
  justify-content: space-between;
  height: 34px;
  padding: 0 6px 0 3px;
  font-size: 18px;
  background: linear-gradient(90deg, #c2cfe1, #d5e2f1);
  border-bottom: 2px solid #858b94;
}

.pane-title.focused {
  color: #e6f1ff;
  background: linear-gradient(90deg, #9db5d8, #b3cbe9);
}

.pin {
  width: 12px;
  height: 18px;
  color: #222;
}

.focused .pin {
  color: #eaf4ff;
}

/* tree */
.tree {
  flex: 1;
  min-height: 0;
  padding-left: 10px;
  background: #fff;
}

.tree ul {
  margin-left: 43px;
}

.tree li {
  position: relative;
}

.tree ul > li::before {
  content: "";
  position: absolute;
  left: 8px;
  top: 0;
  bottom: 0;
  border-left: 1px dotted #999;
}

.tree ul > li:last-child::before {
  bottom: auto;
  height: 16px;
}

.node {
  position: relative;
  display: flex;
  align-items: center;
  height: 29px;
}

.node::before {
  content: "";
  position: absolute;
  left: 8px;
  top: 16px;
  width: 22px;
  border-top: 1px dotted #999;
}

.toggle {
  position: relative;
  display: flex;
  align-items: center;
  justify-content: center;
  width: 17px;
  height: 17px;
  margin-top: 4px;
  border: 1px solid #888;
  background: #fff;
  color: #222;
}

.check {
  width: 12px;
  height: 12px;
  margin: 12px 2px 0 14px;
}

.leaf .check {
  margin-left: 31px;
}

.icon {
  width: 25px;
  height: 25px;
  margin-right: 8px;
}

.hovered {
  position: relative;
  text-decoration: underline;
}

.hand {
  position: absolute;
  left: 36px;
  top: 13px;
  width: 28px;
  height: 36px;
}

/* tabs */
.tabs {
  flex: none;
  display: flex;
  align-items: flex-start;
  height: 36px;
  background: #f0eef0;
}

.tab {
  height: 30px;
  margin-left: 5px;
  padding: 2px 6px 0;
  border-top: 2px solid #858385;
  border-bottom: 2px solid #858385;
}

.tab.active {
  height: 34px;
  padding: 3px 9px 0;
  border-top-color: transparent;
  border-right: 2px solid #858385;
  border-bottom-right-radius: 5px;
}

.tab.boxed {
  height: 31px;
  margin-left: 0;
  padding: 0 7px;
  border: 2px solid #858385;
  border-left: 0;
  border-radius: 0 0 5px 0;
  font-size: 17px;
}

.tab-rest {
  flex: 1;
  border-top: 2px solid #858385;
}

.mark {
  align-self: stretch;
  padding: 12px 38px 0 0;
  border-top: 2px solid #858385;
  color: #b0aeb0;
  font-size: 15px;
}

.mark b {
  color: #f2b3a3;
}

/* details */
.details {
  flex: none;
}

.details-body {
  display: flex;
  height: 239px;
  overflow: hidden;
  background: #f0eef0;
}

table {
  flex: 1;
  table-layout: fixed;
  border-collapse: collapse;
  background: #fff;
  line-height: 20px;
  font-size: 18px;
}

tr {
  height: 29px;
}

td,
th {
  padding: 0 5px;
  border: 1px solid #a5a3a5;
  text-align: left;
}

th {
  color: #333;
  font-size: 16px;
}

.fold {
  width: 20px;
  padding: 0 2px;
  border-width: 0 1px 0 0;
}

.fold .toggle {
  width: 14px;
  height: 14px;
  margin: 0;
}

.key {
  width: 167px;
  white-space: nowrap;
}

.key label {
  display: flex;
  align-items: center;
  gap: 7px;
}

.key input {
  appearance: none;
  width: 19px;
  height: 19px;
  margin: 0;
  border: 1px solid #ccc;
}

.scroll {
  display: flex;
  flex-direction: column;
  align-items: center;
  width: 28px;
  padding: 8px 0;
}

.scroll svg {
  width: 14px;
  height: 14px;
  fill: none;
  stroke: #555;
  stroke-width: 2.5;
}

.thumb {
  width: 24px;
  height: 44px;
  margin: 6px 0 auto;
  background: #cdcbcd;
}

/* graphics */
.graphics {
  flex: 1;
  min-width: 0;
  display: flex;
  flex-direction: column;
  margin-right: 5px;
  border-left: 3px solid #8b8f98;
}

.canvas {
  flex: 1;
  min-height: 0;
  width: 100%;
  background: linear-gradient(#6c87de, #7e9ce3 14%, #9fb0e8 36%, #c6d4f3 62%, #dfe2f8 76%, #f3f3fd 90%, #fff);
}

.axis-line {
  stroke: #1c1c38;
  stroke-width: 4;
  stroke-linecap: round;
  stroke-dasharray: 0 6;
}

.dim {
  stroke: #6a9860;
  stroke-width: 2;
}

.dim .head {
  fill: #6a9860;
  stroke-width: 1;
}

.dim text {
  fill: #6a986a;
  stroke: none;
  font-size: 18px;
}

.dim.low {
  stroke: #96a464;
}

.dim.low .head {
  fill: #96a464;
}

.dim.low text {
  fill: #8c9a74;
}

.section {
  fill: none;
  stroke: #2426c8;
  stroke-width: 2;
}

.section .free {
  stroke: #54dcf8;
}

.scale text {
  fill: #222;
  font-size: 17px;
}

.letter {
  font-size: 18px;
}

.brand,
.release {
  fill: #fff;
  text-anchor: end;
}

.brand {
  font-size: 42px;
  font-weight: bold;
}

.release {
  font-size: 26px;
  fill: #e8f0ff;
}

/* status bar */
footer {
  flex: none;
  display: flex;
  align-items: center;
  height: 33px;
  background: #f0f0f0;
  border-top: 2px solid #bdbbbd;
  border-bottom: 4px solid #2f6064;
}

.ok {
  width: 24px;
  height: 24px;
  margin: 0 20px 0 14px;
}

.status {
  flex: 1;
}

.cell {
  padding-left: 3px;
  border-left: 2px solid #a5a3a5;
}

.selection {
  width: 468px;
}

.units {
  width: 207px;
}

.num {
  width: 61px;
}

.resize {
  width: 22px;
  height: 26px;
}
```
